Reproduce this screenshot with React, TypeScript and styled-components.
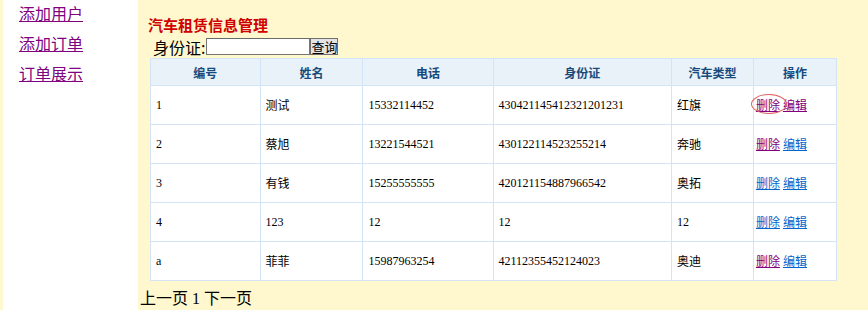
import React from "react";
import styled, { createGlobalStyle } from "styled-components";

const Global = createGlobalStyle`
  html, body { margin: 0; padding: 0; background: #fff8cf; }
  body { font-family: "Liberation Serif", "Noto Sans CJK SC", serif; color: #000; }
`;

const Page = styled.div`
  display: flex;
  min-height: 310px;
`;

const Sidebar = styled.nav`
  margin-left: 3px;
  width: 135px;
  background: #fff;
  padding-top: 3px;
  display: flex;
  flex-direction: column;
  align-items: flex-start;
`;

const SideLink = styled.a`
  font-family: "Noto Sans CJK SC", sans-serif;
  font-size: 16px;
  line-height: 20px;
  height: 20px;
  margin: 0 0 10px 16px;
  color: #800080;
  text-decoration: underline;
  cursor: pointer;
`;

const Main = styled.main`
  flex: 1;
  display: flex;
  flex-direction: column;
  align-items: flex-start;
`;

const Title = styled.h1`
  margin: 16px 0 0 10px;
  font-family: "Noto Sans CJK SC", sans-serif;
  font-size: 15px;
  line-height: 18px;
  font-weight: bold;
  color: #d00000;
`;

const SearchRow = styled.div`
  margin: 4px 0 0 15px;
  height: 17px;
  display: flex;
  align-items: center;
  font-family: "Noto Sans CJK SC", sans-serif;
  font-size: 16px;
`;

const Input = styled.input`
  box-sizing: border-box;
  width: 104px;
  height: 17px;
  margin: 0 0 0 1px;
  padding: 0 2px;
  border: 1px solid #767676;
  border-top-color: #6a6a6a;
  background: #fff;
`;

const Button = styled.button`
  box-sizing: border-box;
  width: 28px;
  height: 17px;
  margin: 0;
  padding: 0;
  font-family: "Noto Sans CJK SC", sans-serif;
  font-size: 13px;
  line-height: 15px;
  background: #e4e4e4;
  border: 1px solid #707070;
  color: #000;
`;

const Table = styled.table`
  margin: 3px 0 0 12px;
  border-collapse: collapse;
  width: 687px;
  background: #fff;
  border: 1px solid #d2e4f6;
`;

const Th = styled.th<{ $w: number }>`
  width: ${(p) => p.$w}px;
  height: 26px;
  padding: 0;
  background: #e9f1f9;
  border: 1px solid #d2e4f6;
  font-family: "Noto Sans CJK SC", sans-serif;
  font-size: 12px;
  font-weight: bold;
  color: #174a7c;
  text-align: center;
`;

const Td = styled.td`
  height: 38px;
  padding: 0 0 0 5px;
  border: 1px solid #d2e4f6;
  font-family: "Liberation Serif", "Noto Sans CJK SC", serif;
  font-size: 12px;
  text-align: left;
  vertical-align: middle;
`;

const OpCell = styled(Td)`
  position: relative;
  padding-left: 2px;
`;

const OpLink = styled.a<{ $visited?: boolean }>`
  font-family: "Noto Sans CJK SC", sans-serif;
  font-size: 12px;
  color: ${(p) => (p.$visited ? "#800080" : "#0066cc")};
  text-decoration: underline;
  cursor: pointer;
  margin-right: 3px;
`;

const Circle = styled.span`
  position: absolute;
  left: -3px;
  top: 8px;
  width: 34px;
  height: 18px;
  border: 1px solid #e06060;
  border-radius: 50%;
  pointer-events: none;
`;

const Pager = styled.div`
  margin: 9px 0 0 2px;
  font-family: "Liberation Serif", "Noto Sans CJK SC", serif;
  font-size: 16px;
  line-height: 18px;
`;

const rows = [
  { id: "1", name: "测试", phone: "15332114452", card: "430421145412321201231", car: "红旗", del: true, edit: true, circle: true },
  { id: "2", name: "蔡旭", phone: "13221544521", card: "430122114523255214", car: "奔驰", del: true, edit: false },
  { id: "3", name: "有钱", phone: "15255555555", card: "420121154887966542", car: "奥拓", del: false, edit: false },
  { id: "4", name: "123", phone: "12", card: "12", car: "12", del: false, edit: false },
  { id: "a", name: "菲菲", phone: "15987963254", card: "42112355452124023", car: "奥迪", del: true, edit: false },
];

const cols = [
  { t: "编号", w: 110 },
  { t: "姓名", w: 103 },
  { t: "电话", w: 130 },
  { t: "身份证", w: 178 },
  { t: "汽车类型", w: 82 },
  { t: "操作", w: 83 },
];

export default function App() {
  return (
    <>
      <Global />
      <Page>
        <Sidebar>
          <SideLink>添加用户</SideLink>
          <SideLink>添加订单</SideLink>
          <SideLink>订单展示</SideLink>
        </Sidebar>
        <Main>
          <Title>汽车租赁信息管理</Title>
          <SearchRow>
            身份证:<Input />
            <Button>查询</Button>
          </SearchRow>
          <Table>
            <thead>
              <tr>
                {cols.map((c) => (
                  <Th key={c.t} $w={c.w}>{c.t}</Th>
                ))}
              </tr>
            </thead>
            <tbody>
              {rows.map((r) => (
                <tr key={r.id}>
                  <Td>{r.id}</Td>
                  <Td>{r.name}</Td>
                  <Td>{r.phone}</Td>
                  <Td>{r.card}</Td>
                  <Td>{r.car}</Td>
                  <OpCell>
                    <OpLink $visited={r.del}>删除</OpLink>
                    <OpLink $visited={r.edit}>编辑</OpLink>
                    {r.circle && <Circle />}
                  </OpCell>
                </tr>
              ))}
            </tbody>
          </Table>
          <Pager>上一页 1 下一页</Pager>
        </Main>
      </Page>
    </>
  );
}
